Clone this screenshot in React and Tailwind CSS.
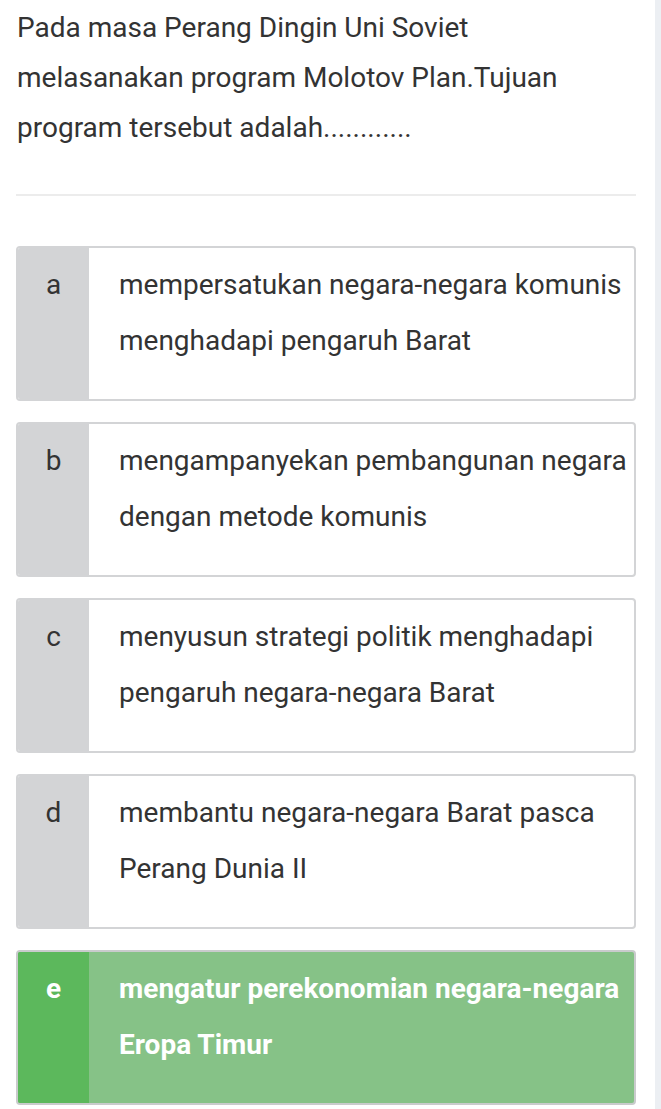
import React from "react";

const options = [
  { key: "a", text: "mempersatukan negara-negara komunis menghadapi pengaruh Barat" },
  { key: "b", text: "mengampanyekan pembangunan negara dengan metode komunis" },
  { key: "c", text: "menyusun strategi politik menghadapi pengaruh negara-negara Barat" },
  { key: "d", text: "membantu negara-negara Barat pasca Perang Dunia II" },
  { key: "e", text: "mengatur perekonomian negara-negara Eropa Timur", correct: true },
];

const Option = ({ opt }) => {
  const box = opt.correct
    ? "border-[#c9cbcc] bg-[#86c287] text-white font-bold"
    : "border-[#d3d4d6] bg-white text-[#333] font-normal";
  const side = opt.correct ? "bg-[#5cb85c]" : "bg-[#d3d4d6]";
  return (
    <div className={`flex h-[155px] rounded-[4px] border-2 overflow-hidden ${box}`}>
      <div className={`w-[71px] shrink-0 text-center pt-[9px] leading-[56px] ${side}`}>
        {opt.key}
      </div>
      <div className="pl-[30px] pr-1 pt-[9px] leading-[56px]">{opt.text}</div>
    </div>
  );
};

export default function App() {
  return (
    <div
      className="flex min-h-[1109px] bg-white text-[28px]"
      style={{ fontFamily: "Roboto, 'Noto Sans', sans-serif" }}
    >
      <div className="w-[655px] shrink-0 pl-[16px] pr-[19px]">
        <p className="pl-[1px] pt-[3px] leading-[50px] text-[#333] pr-[40px]">
          Pada masa Perang Dingin Uni Soviet melasanakan program Molotov Plan.Tujuan program
          tersebut adalah............
        </p>
        <div className="mt-[41px] h-[2px] bg-[#ececec]" />
        <div className="mt-[50px] flex flex-col gap-[21px]">
          {options.map((o) => (
            <Option key={o.key} opt={o} />
          ))}
        </div>
      </div>
      <div className="flex-1 bg-[#eceff3]" />
    </div>
  );
}
